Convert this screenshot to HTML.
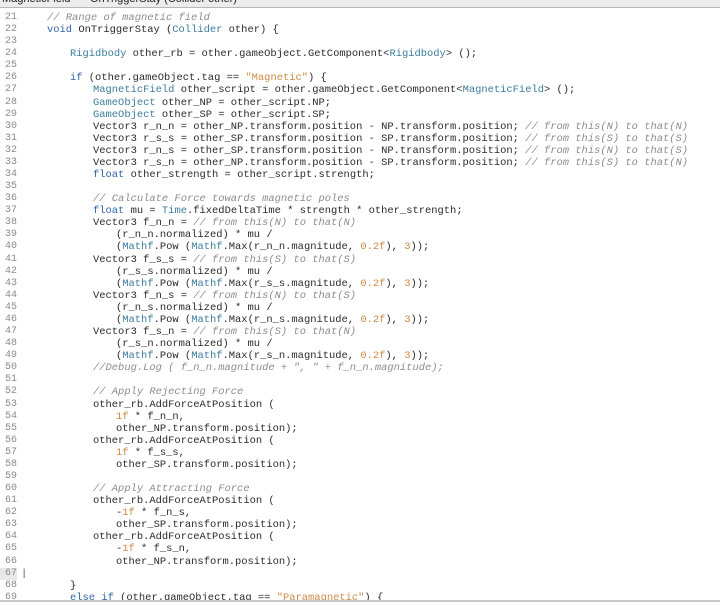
<!DOCTYPE html>
<html><head><meta charset="utf-8"><style>
html,body{margin:0;padding:0;background:#fff;width:720px;height:602px;overflow:hidden;position:relative}
.top{position:absolute;left:0;top:0;width:720px;height:7px;background:#ececec;border-bottom:1px solid #b8b8b8;overflow:hidden}
.top span{position:absolute;top:-7px;font:11px "Liberation Sans",sans-serif;color:#222}
.code{position:absolute;left:0;top:12px;font-family:"Liberation Mono",monospace;font-size:10.45px;line-height:12.08px;color:#2a2a2a}
.l{height:12.08px;position:relative}
.n{position:absolute;left:0;width:17px;text-align:right;color:#8a8a8a;font-size:10px}
.t{position:absolute;left:24px;white-space:pre;tab-size:23px;-moz-tab-size:23px}
.k{color:#2f66a8}.y{color:#3a7c9c}.c{color:#8c8c8c;font-style:italic}.s{color:#cc8a45}
.cur{background:#e8e8e8}
.bot{position:absolute;left:0;top:600px;width:720px;height:2px;background:#c8c8c8}
</style></head><body>
<div class="top"><span style="left:2px">MagneticField</span><span style="left:90px">OnTriggerStay (Collider other)</span></div>
<div class="code"><div class="l"><span class="n">21</span><span class="t">	<span class="c">// Range of magnetic field</span></span></div><div class="l"><span class="n">22</span><span class="t">	<span class="k">void</span> OnTriggerStay (<span class="y">Collider</span> other) {</span></div><div class="l"><span class="n">23</span></div><div class="l"><span class="n">24</span><span class="t">		<span class="y">Rigidbody</span> other_rb = other.gameObject.GetComponent&lt;<span class="y">Rigidbody</span>&gt; ();</span></div><div class="l"><span class="n">25</span></div><div class="l"><span class="n">26</span><span class="t">		<span class="k">if</span> (other.gameObject.tag == <span class="s">"Magnetic"</span>) {</span></div><div class="l"><span class="n">27</span><span class="t">			<span class="y">MagneticField</span> other_script = other.gameObject.GetComponent&lt;<span class="y">MagneticField</span>&gt; ();</span></div><div class="l"><span class="n">28</span><span class="t">			<span class="y">GameObject</span> other_NP = other_script.NP;</span></div><div class="l"><span class="n">29</span><span class="t">			<span class="y">GameObject</span> other_SP = other_script.SP;</span></div><div class="l"><span class="n">30</span><span class="t">			Vector3 r_n_n = other_NP.transform.position - NP.transform.position; <span class="c">// from this(N) to that(N)</span></span></div><div class="l"><span class="n">31</span><span class="t">			Vector3 r_s_s = other_SP.transform.position - SP.transform.position; <span class="c">// from this(S) to that(S)</span></span></div><div class="l"><span class="n">32</span><span class="t">			Vector3 r_n_s = other_SP.transform.position - NP.transform.position; <span class="c">// from this(N) to that(S)</span></span></div><div class="l"><span class="n">33</span><span class="t">			Vector3 r_s_n = other_NP.transform.position - SP.transform.position; <span class="c">// from this(S) to that(N)</span></span></div><div class="l"><span class="n">34</span><span class="t">			<span class="k">float</span> other_strength = other_script.strength;</span></div><div class="l"><span class="n">35</span></div><div class="l"><span class="n">36</span><span class="t">			<span class="c">// Calculate Force towards magnetic poles</span></span></div><div class="l"><span class="n">37</span><span class="t">			<span class="k">float</span> mu = <span class="y">Time</span>.fixedDeltaTime * strength * other_strength;</span></div><div class="l"><span class="n">38</span><span class="t">			Vector3 f_n_n = <span class="c">// from this(N) to that(N)</span></span></div><div class="l"><span class="n">39</span><span class="t">				(r_n_n.normalized) * mu /</span></div><div class="l"><span class="n">40</span><span class="t">				(<span class="y">Mathf</span>.Pow (<span class="y">Mathf</span>.Max(r_n_n.magnitude, <span class="s">0.2f</span>), <span class="s">3</span>));</span></div><div class="l"><span class="n">41</span><span class="t">			Vector3 f_s_s = <span class="c">// from this(S) to that(S)</span></span></div><div class="l"><span class="n">42</span><span class="t">				(r_s_s.normalized) * mu /</span></div><div class="l"><span class="n">43</span><span class="t">				(<span class="y">Mathf</span>.Pow (<span class="y">Mathf</span>.Max(r_s_s.magnitude, <span class="s">0.2f</span>), <span class="s">3</span>));</span></div><div class="l"><span class="n">44</span><span class="t">			Vector3 f_n_s = <span class="c">// from this(N) to that(S)</span></span></div><div class="l"><span class="n">45</span><span class="t">				(r_n_s.normalized) * mu /</span></div><div class="l"><span class="n">46</span><span class="t">				(<span class="y">Mathf</span>.Pow (<span class="y">Mathf</span>.Max(r_n_s.magnitude, <span class="s">0.2f</span>), <span class="s">3</span>));</span></div><div class="l"><span class="n">47</span><span class="t">			Vector3 f_s_n = <span class="c">// from this(S) to that(N)</span></span></div><div class="l"><span class="n">48</span><span class="t">				(r_s_n.normalized) * mu /</span></div><div class="l"><span class="n">49</span><span class="t">				(<span class="y">Mathf</span>.Pow (<span class="y">Mathf</span>.Max(r_s_n.magnitude, <span class="s">0.2f</span>), <span class="s">3</span>));</span></div><div class="l"><span class="n">50</span><span class="t">			<span class="c">//Debug.Log ( f_n_n.magnitude + ", " + f_n_n.magnitude);</span></span></div><div class="l"><span class="n">51</span></div><div class="l"><span class="n">52</span><span class="t">			<span class="c">// Apply Rejecting Force</span></span></div><div class="l"><span class="n">53</span><span class="t">			other_rb.AddForceAtPosition (</span></div><div class="l"><span class="n">54</span><span class="t">				<span class="s">1f</span> * f_n_n,</span></div><div class="l"><span class="n">55</span><span class="t">				other_NP.transform.position);</span></div><div class="l"><span class="n">56</span><span class="t">			other_rb.AddForceAtPosition (</span></div><div class="l"><span class="n">57</span><span class="t">				<span class="s">1f</span> * f_s_s,</span></div><div class="l"><span class="n">58</span><span class="t">				other_SP.transform.position);</span></div><div class="l"><span class="n">59</span></div><div class="l"><span class="n">60</span><span class="t">			<span class="c">// Apply Attracting Force</span></span></div><div class="l"><span class="n">61</span><span class="t">			other_rb.AddForceAtPosition (</span></div><div class="l"><span class="n">62</span><span class="t">				-<span class="s">1f</span> * f_n_s,</span></div><div class="l"><span class="n">63</span><span class="t">				other_SP.transform.position);</span></div><div class="l"><span class="n">64</span><span class="t">			other_rb.AddForceAtPosition (</span></div><div class="l"><span class="n">65</span><span class="t">				-<span class="s">1f</span> * f_s_n,</span></div><div class="l"><span class="n">66</span><span class="t">				other_NP.transform.position);</span></div><div class="l"><span class="n cur">67</span><span class="t" style="left:21px;color:#555">|</span></div><div class="l"><span class="n">68</span><span class="t">		}</span></div><div class="l"><span class="n">69</span><span class="t">		<span class="k">else if</span> (other.gameObject.tag == <span class="s">"Paramagnetic"</span>) {</span></div></div>
<div class="bot"></div>
</body></html>
